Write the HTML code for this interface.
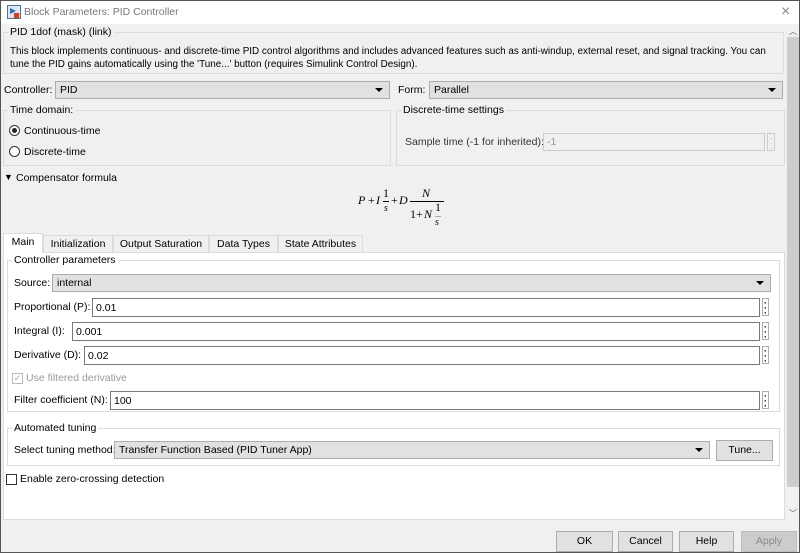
<!DOCTYPE html>
<html><head><style>
*{box-sizing:border-box;margin:0;padding:0}
body{width:800px;height:553px;overflow:hidden;background:#f0f0f0;font-family:"Liberation Sans",sans-serif;font-size:10.5px;color:#000;position:relative}
.a{position:absolute;white-space:nowrap}
.box{position:absolute;border:1px solid #dcdcdc}
.dd{position:absolute;background:#e1e1e1;border:1px solid #adadad;height:18px;padding:1px 4px;line-height:14px}
.dd:after{content:"";position:absolute;right:6px;top:6px;border-left:4px solid transparent;border-right:4px solid transparent;border-top:4px solid #000}
.ed{position:absolute;background:#fff;border:1px solid #7a7a7a;height:19px;padding:2px 3px;line-height:14px}
.dots{position:absolute;width:7px;height:18px;border:1px solid #adadad;background:#fff;font-size:9px;line-height:5px;text-align:center;font-weight:bold;padding-top:2px}
.btn{position:absolute;background:#e1e1e1;border:1px solid #adadad;height:21px;text-align:center;line-height:19px}
.tab{position:absolute;top:235px;height:18px;background:#f0f0f0;border:1px solid #dcdcdc;border-bottom:none;line-height:16px;text-align:center}
</style></head><body>
<div class="a" style="left:0;top:0;width:800px;height:553px;border:1px solid #555"></div>
<div class="a" style="left:1px;top:1px;width:798px;height:23px;background:#fff"></div>
<svg class="a" style="left:7px;top:5px" width="15" height="15"><rect x="0.5" y="0.5" width="13" height="13" fill="#dfe8f2" stroke="#5a6f8a"/><path d="M3 3 L9 6 L3 9Z" fill="#2d6fb8"/><rect x="7" y="8" width="5" height="5" fill="#d04020"/></svg>
<div class="a" style="left:24px;top:6px;color:#777">Block Parameters: PID Controller</div>
<div class="a" style="left:781px;top:3px;color:#888;font-size:16px">×</div>
<div class="a" style="left:786px;top:24px;width:13px;height:496px;background:#f0f0f0"></div>
<div class="a" style="left:787px;top:37px;width:12px;height:450px;background:#cdcdcd"></div>
<div class="a" style="left:789px;top:26px;font-size:8px;color:#555">︿</div>
<div class="a" style="left:789px;top:508px;font-size:8px;color:#555">﹀</div>
<div class="box" style="left:3px;top:32px;width:781px;height:42px"></div>
<div class="a" style="left:8px;top:26px;background:#f0f0f0;padding:0 2px">PID 1dof (mask) (link)</div>
<div class="a" style="left:10px;top:45px;line-height:13px;font-size:9.9px">This block implements continuous- and discrete-time PID control algorithms and includes advanced features such as anti-windup, external reset, and signal tracking. You can<br>tune the PID gains automatically using the 'Tune...' button (requires Simulink Control Design).</div>
<div class="a" style="left:4px;top:84px">Controller:</div>
<div class="dd" style="left:55px;top:81px;width:335px">PID</div>
<div class="a" style="left:398px;top:84px">Form:</div>
<div class="dd" style="left:429px;top:81px;width:354px">Parallel</div>
<div class="box" style="left:3px;top:110px;width:388px;height:56px"></div>
<div class="a" style="left:8px;top:104px;background:#f0f0f0;padding:0 2px">Time domain:</div>
<div class="a" style="left:9px;top:125px;width:11px;height:11px;border:1px solid #333;border-radius:50%;background:#fff"></div>
<div class="a" style="left:12px;top:128px;width:5px;height:5px;border-radius:50%;background:#222"></div>
<div class="a" style="left:24px;top:125px">Continuous-time</div>
<div class="a" style="left:9px;top:146px;width:11px;height:11px;border:1px solid #333;border-radius:50%;background:#fff"></div>
<div class="a" style="left:24px;top:146px">Discrete-time</div>
<div class="box" style="left:396px;top:110px;width:389px;height:56px"></div>
<div class="a" style="left:401px;top:104px;background:#f0f0f0;padding:0 2px">Discrete-time settings</div>
<div class="a" style="left:405px;top:136px;color:#333">Sample time (-1 for inherited):</div>
<div class="a" style="left:543px;top:133px;width:222px;height:18px;border:1px solid #ccc;background:#f0f0f0;color:#999;padding:2px 3px">-1</div>
<div class="a" style="left:767px;top:133px;width:8px;height:18px;border:1px solid #ccc;color:#aaa;font-size:8px;text-align:center;line-height:5px;padding-top:2px">·<br>·<br>·</div>
<div class="a" style="left:4px;top:172px;font-size:9px">▼</div>
<div class="a" style="left:16px;top:172px">Compensator formula</div>
<div class="a" style="left:358px;top:186px;font-family:'Liberation Serif',serif;font-style:italic;font-size:12px;width:100px;height:40px">
<span class="a" style="left:0;top:7px">P</span><span class="a" style="left:10px;top:7px;font-style:normal">+</span><span class="a" style="left:18px;top:7px">I</span>
<span class="a" style="left:25px;top:0;font-style:normal">1</span><span class="a" style="left:25px;width:6px;border-top:1px solid #000;top:15px"></span><span class="a" style="left:26px;top:17px;font-size:10px">s</span>
<span class="a" style="left:33px;top:7px;font-style:normal">+</span><span class="a" style="left:41px;top:7px">D</span>
<span class="a" style="left:64px;top:0">N</span><span class="a" style="left:52px;top:15px;width:34px;border-top:1px solid #000"></span>
<span class="a" style="left:52px;top:21px;font-style:normal">1+</span><span class="a" style="left:66px;top:21px">N</span><span class="a" style="left:77px;top:14px;font-style:normal">1</span><span class="a" style="left:77px;top:30px;width:6px;border-top:1px solid #aaa"></span><span class="a" style="left:77px;top:31px;font-size:10px">s</span>
</div>
<div class="tab" style="left:3px;width:40px;top:233px;height:20px;background:#fff;z-index:2">Main</div>
<div class="tab" style="left:43px;width:70px">Initialization</div>
<div class="tab" style="left:113px;width:96px">Output Saturation</div>
<div class="tab" style="left:209px;width:69px">Data Types</div>
<div class="tab" style="left:278px;width:85px">State Attributes</div>
<div class="a" style="left:3px;top:252px;width:782px;height:268px;background:#fff;border:1px solid #dcdcdc"></div>
<div class="box" style="left:7px;top:260px;width:773px;height:152px"></div>
<div class="a" style="left:12px;top:254px;background:#fff;padding:0 2px">Controller parameters</div>
<div class="a" style="left:14px;top:277px">Source:</div>
<div class="dd" style="left:52px;top:274px;width:719px">internal</div>
<div class="a" style="left:14px;top:301px">Proportional (P):</div>
<div class="ed" style="left:92px;top:298px;width:668px">0.01</div>
<div class="dots" style="left:762px;top:298px">·<br>·<br>·</div>
<div class="a" style="left:14px;top:325px">Integral (I):</div>
<div class="ed" style="left:72px;top:322px;width:688px">0.001</div>
<div class="dots" style="left:762px;top:322px">·<br>·<br>·</div>
<div class="a" style="left:14px;top:349px">Derivative (D):</div>
<div class="ed" style="left:84px;top:346px;width:676px">0.02</div>
<div class="dots" style="left:762px;top:346px">·<br>·<br>·</div>
<div class="a" style="left:12px;top:373px;width:11px;height:11px;border:1px solid #bbb;color:#aaa;font-size:9px;line-height:9px;text-align:center">✓</div>
<div class="a" style="left:26px;top:372px;color:#999">Use filtered derivative</div>
<div class="a" style="left:14px;top:394px">Filter coefficient (N):</div>
<div class="ed" style="left:110px;top:391px;width:650px">100</div>
<div class="dots" style="left:762px;top:391px">·<br>·<br>·</div>
<div class="box" style="left:7px;top:428px;width:773px;height:38px"></div>
<div class="a" style="left:12px;top:422px;background:#fff;padding:0 2px">Automated tuning</div>
<div class="a" style="left:14px;top:444px">Select tuning method:</div>
<div class="dd" style="left:114px;top:441px;width:596px">Transfer Function Based (PID Tuner App)</div>
<div class="btn" style="left:716px;top:440px;width:57px">Tune...</div>
<div class="a" style="left:6px;top:474px;width:11px;height:11px;border:1px solid #333;background:#fff"></div>
<div class="a" style="left:20px;top:473px">Enable zero-crossing detection</div>
<div class="btn" style="left:556px;top:531px;width:57px">OK</div>
<div class="btn" style="left:618px;top:531px;width:55px">Cancel</div>
<div class="btn" style="left:679px;top:531px;width:55px">Help</div>
<div class="btn" style="left:741px;top:531px;width:56px;background:#ccc;border-color:#bfbfbf;color:#888">Apply</div>
</body></html>
